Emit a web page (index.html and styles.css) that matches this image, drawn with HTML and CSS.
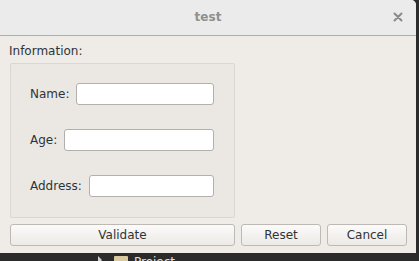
FILE: index.html
```html
<!DOCTYPE html>
<html>
<head>
<meta charset="utf-8">
<link rel="stylesheet" href="styles.css">
</head>
<body>
<div class="screen">
  <div class="window">
    <div class="titlebar">
      <span class="title">test</span>
      <span class="close">
        <svg width="10" height="10" viewBox="0 0 10 10"><path d="M1.5 1.5 L8.5 8.5 M8.5 1.5 L1.5 8.5" stroke="#8a8a8a" stroke-width="2" stroke-linecap="round"/></svg>
      </span>
    </div>
    <div class="content">
      <div class="group-label">Information:</div>
      <div class="groupbox">
        <div class="row"><label class="lbl">Name:</label><input class="field" type="text"></div>
        <div class="row"><label class="lbl">Age:</label><input class="field" type="text"></div>
        <div class="row"><label class="lbl">Address:</label><input class="field" type="text"></div>
      </div>
      <div class="buttons">
        <button class="btn btn-wide">Validate</button>
        <button class="btn">Reset</button>
        <button class="btn">Cancel</button>
      </div>
    </div>
  </div>
  <div class="desktop">
    <span class="arrow"></span>
    <span class="folder"></span>
    <span class="dtext">Project</span>
  </div>
</div>
</body>
</html>
```
FILE: styles.css
```css
* { box-sizing: border-box; }
html, body { margin: 0; padding: 0; }
body {
  width: 419px;
  height: 261px;
  overflow: hidden;
  background: #2c2c2c;
  font-family: "DejaVu Sans", sans-serif;
  font-size: 12px;
  color: #2e3436;
}
.screen {
  width: 419px;
  height: 261px;
  display: flex;
  flex-direction: column;
}
.window {
  width: 416px;
  height: 253px;
  flex: none;
  background: #efebe7;
  border-top-right-radius: 5px;
  overflow: hidden;
  display: flex;
  flex-direction: column;
}
.titlebar {
  height: 36px;
  flex: none;
  background: #ebebeb;
  border-bottom: 1px solid #aeaeae;
  display: flex;
  align-items: center;
  justify-content: center;
  position: relative;
}
.title {
  font-weight: bold;
  color: #8f8f8f;
  font-size: 12px;
  margin-top: -1px;
}
.close {
  position: absolute;
  right: 13px;
  top: 12px;
  width: 10px;
  height: 10px;
  display: flex;
}
.content {
  padding: 8px 9px 0 10px;
  display: flex;
  flex-direction: column;
}
.group-label {
  height: 14px;
  line-height: 14px;
  margin-left: -1px;
}
.groupbox {
  margin-top: 5px;
  width: 225px;
  height: 155px;
  border: 1px solid #dad6d2;
  border-radius: 2px;
  background: #ebe8e4;
  padding: 19px 20px 0 19px;
  display: flex;
  flex-direction: column;
  gap: 24px;
}
.row {
  display: flex;
  align-items: center;
  gap: 7px;
  height: 22px;
}
.lbl {
  line-height: 14px;
  white-space: nowrap;
}
.field {
  flex: 1;
  min-width: 0;
  height: 22px;
  border: 1px solid #b3afab;
  border-radius: 3px;
  background: #ffffff;
  margin: 0;
  padding: 0 4px;
  font: inherit;
}
.buttons {
  margin-top: 6px;
  display: flex;
  gap: 6px;
}
.btn {
  flex: none;
  height: 22px;
  width: 80px;
  margin: 0;
  padding: 0;
  border: 1px solid #bdb9b5;
  border-radius: 3px;
  background: linear-gradient(#fcfbfa, #ece9e6);
  font: inherit;
  color: #2e3436;
  line-height: 20px;
}
.btn-wide { width: 225px; }
.desktop {
  flex: 1;
  background: #2b2b2b;
  display: flex;
  align-items: flex-start;
  overflow: hidden;
  padding-left: 98px;
  padding-top: 2px;
}
.arrow {
  width: 0; height: 0;
  border-left: 4px solid #cfcfcf;
  border-top: 4px solid transparent;
  border-bottom: 4px solid transparent;
  margin-top: 1px;
}
.folder {
  width: 14px;
  height: 10px;
  background: #d9c9a0;
  border-radius: 1px;
  margin-left: 12px;
  margin-top: 1px;
}
.dtext {
  color: #e0e0e0;
  margin-left: 6px;
  line-height: 14px;
}
```
